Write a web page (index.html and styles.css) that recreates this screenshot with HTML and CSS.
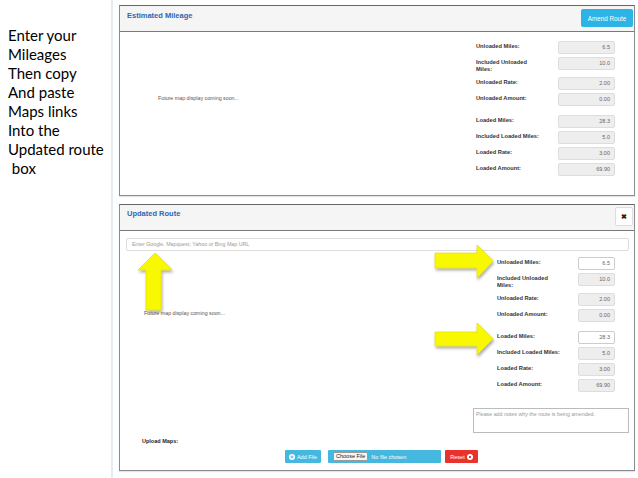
FILE: index.html
```html
<!DOCTYPE html>
<html>
<head>
    <meta charset="UTF-8">
    <title>Amend Route</title>
    <meta name="viewport" content="width=device-width, initial-scale=1">
    <link rel="stylesheet" href="styles.css">
</head>
<body>
<div class="notes">
    Enter your<br>
    Mileages<br>
    Then copy<br>
    And paste<br>
    Maps links<br>
    Into the<br>
    Updated route<br>
    &nbsp;box
</div>

<div class="main">
    <!-- estimated -->
    <div class="panel panel-est">
        <div class="panel-head">
            <div class="panel-title">Estimated Mileage</div>
            <button class="amend">Amend Route</button>
        </div>
        <div class="panel-body">
            <div class="map map-est">Future map display coming soon...</div>
            <div class="fields fields-est">
                <div class="row"><div class="lbl">Unloaded Miles:</div><div class="val">6.5</div></div>
                <div class="row"><div class="lbl">Included Unloaded<br>Miles:</div><div class="val">10.0</div></div>
                <div class="row"><div class="lbl">Unloaded Rate:</div><div class="val">2.00</div></div>
                <div class="row"><div class="lbl">Unloaded Amount:</div><div class="val">0.00</div></div>
                <div class="row group"><div class="lbl">Loaded Miles:</div><div class="val">28.3</div></div>
                <div class="row"><div class="lbl">Included Loaded Miles:</div><div class="val">5.0</div></div>
                <div class="row"><div class="lbl">Loaded Rate:</div><div class="val">3.00</div></div>
                <div class="row"><div class="lbl">Loaded Amount:</div><div class="val">69.90</div></div>
            </div>
        </div>
    </div>

    <!-- updated -->
    <div class="panel panel-upd">
        <div class="panel-head">
            <div class="panel-title">Updated Route</div>
            <button class="close">&#10006;</button>
        </div>
        <div class="url">Enter Google, Mapquest, Yahoo or Bing Map URL</div>
        <div class="panel-body">
            <div class="map map-upd">Future map display coming soon...</div>
            <div class="fields fields-upd">
                <div class="row"><div class="lbl">Unloaded Miles:</div><div class="val edit">6.5</div></div>
                <div class="row"><div class="lbl">Included Unloaded<br>Miles:</div><div class="val">10.0</div></div>
                <div class="row"><div class="lbl">Unloaded Rate:</div><div class="val">2.00</div></div>
                <div class="row"><div class="lbl">Unloaded Amount:</div><div class="val">0.00</div></div>
                <div class="row group"><div class="lbl">Loaded Miles:</div><div class="val edit">28.3</div></div>
                <div class="row"><div class="lbl">Included Loaded Miles:</div><div class="val">5.0</div></div>
                <div class="row"><div class="lbl">Loaded Rate:</div><div class="val">3.00</div></div>
                <div class="row"><div class="lbl">Loaded Amount:</div><div class="val">69.90</div></div>
            </div>
        </div>
        <div class="notes-box">Please add notes why the route is being amended.</div>
        <div class="upload-lbl">Upload Maps:</div>
        <div class="btns">
            <span class="btn btn-add">
                <svg width="6" height="6" viewBox="0 0 10 10"><circle cx="5" cy="5" r="5" fill="#fff"/><path d="M5 2.5v5M2.5 5h5" stroke="#45b8e0" stroke-width="1.6"/></svg>
                Add File
            </span>
            <span class="btn btn-file"><span class="choose">Choose File</span> No file chosen</span>
            <span class="btn btn-reset">
                Reset
                <svg width="6" height="6" viewBox="0 0 10 10"><circle cx="5" cy="5" r="5" fill="#fff"/><path d="M3.2 3.2l3.6 3.6M6.8 3.2l-3.6 3.6" stroke="#e8332c" stroke-width="1.6"/></svg>
            </span>
        </div>
    </div>
</div>

<!-- yellow pointers drawn over the form -->
<svg class="arrows" width="638" height="478" viewBox="0 0 638 478">
    <defs>
        <filter id="sh" x="-20%" y="-20%" width="150%" height="150%">
            <feDropShadow dx="1" dy="2" stdDeviation="1.5" flood-color="#000" flood-opacity="0.35"/>
        </filter>
    </defs>
    <polygon filter="url(#sh)" fill="#f8f800" stroke="#e0d800" stroke-width="0.6"
             points="155,253 172,270 161,270 161,310 146,310 146,270 138,270"/>
    <polygon filter="url(#sh)" fill="#f8f800" stroke="#e0d800" stroke-width="0.6"
             points="435,253 477,253 477,245 493,261 477,278 477,268 435,268"/>
    <polygon filter="url(#sh)" fill="#f8f800" stroke="#e0d800" stroke-width="0.6"
             points="435,332 477,332 477,323 493,339 477,355 477,346 435,346"/>
</svg>
</body>
</html>
```

FILE: styles.css
```css
body {
    margin: 0;
    display: flex;
    font-family: "Liberation Sans", Arial, sans-serif;
    background: #fff;
    overflow: hidden;
}

.notes {
    width: 113px;
    height: 478px;
    box-sizing: border-box;
    padding: 26px 0 0 8px;
    border-right: 2px solid #e4ecf2;
    font-family: Lato, "Open Sans", sans-serif;
    font-size: 15px;
    line-height: 19px;
    color: #000;
}

.main {
    padding: 5px 0 0 6px;
    display: flex;
    flex-direction: column;
    gap: 8px;
}

.panel {
    width: 516px;
    box-sizing: border-box;
    border: 1px solid #8c8c8c;
    border-top-color: #666;
    box-shadow: 0 1px 1px rgba(0,0,0,0.1);
}

.panel-est {
    height: 191px;
}

.panel-head {
    display: flex;
    justify-content: space-between;
    align-items: flex-start;
    height: 25px;
    background: #f5f5f5;
    border-bottom: 1px solid #7a7a7a;
    padding-left: 7px;
}

.panel-title {
    margin-top: 6px;
    font-size: 7.5px;
    line-height: 8px;
    font-weight: bold;
    color: #2e66b0;
}

.panel-upd .panel-title {
    margin-top: 5px;
}

.amend {
    margin: 3px 1px 0 0;
    width: 52px;
    height: 18px;
    border: none;
    border-radius: 2px;
    background: #2cb4e6;
    color: #fff;
    font-family: "Liberation Sans", Arial, sans-serif;
    font-size: 6.3px;
    padding: 0;
}

.close {
    margin: 2px 1px 0 0;
    width: 18px;
    height: 19px;
    background: #fff;
    border: 1px solid #ddd;
    border-radius: 2px;
    font-size: 7px;
    font-weight: bold;
    color: #222;
    padding: 0;
}

.panel-body {
    display: flex;
}

.map {
    flex: 1;
    font-size: 5.3px;
    line-height: 6px;
    color: #555;
}

.map-est {
    padding: 63px 0 0 38px;
}

.map-upd {
    padding: 59px 0 0 24px;
}

.fields-est {
    width: 158px;
    padding-top: 9px;
}

.fields-upd {
    width: 137px;
    padding-top: 6px;
}

.row {
    display: flex;
    align-items: flex-start;
    margin-bottom: 3px;
}

.row.group {
    margin-top: 9px;
}

.lbl {
    width: 82px;
    padding: 2px 0 1px;
    font-size: 5.7px;
    line-height: 7px;
    font-weight: bold;
    color: #333;
}

.fields-upd .lbl {
    width: 81px;
}

.val {
    width: 57px;
    height: 13px;
    box-sizing: border-box;
    background: #eee;
    border: 1px solid #ddd;
    border-radius: 2px;
    padding-right: 4px;
    text-align: right;
    font-size: 5.5px;
    line-height: 11px;
    color: #666;
}

.fields-upd .val {
    width: 37px;
}

.val.edit {
    background: #fff;
    border-color: #ccc;
}

.url {
    margin: 7px 5px 0 6px;
    height: 13px;
    box-sizing: border-box;
    border: 1px solid #ddd;
    border-radius: 2px;
    padding-left: 5px;
    font-size: 5.3px;
    line-height: 11px;
    color: #999;
}

.notes-box {
    margin: 13px 5px 0 auto;
    width: 156px;
    height: 25px;
    box-sizing: border-box;
    border: 1px solid #bbb;
    padding: 2px 2px;
    font-size: 5.3px;
    line-height: 6px;
    color: #999;
}

.upload-lbl {
    margin: 5px 0 0 22px;
    font-size: 5.5px;
    line-height: 7px;
    font-weight: bold;
    color: #222;
}

.btns {
    display: flex;
    align-items: center;
    margin-top: 5px;
    padding: 0 0 7px 165px;
}

.btn {
    display: flex;
    align-items: center;
    justify-content: center;
    gap: 2px;
    height: 13px;
    box-sizing: border-box;
    border-radius: 1px;
    font-size: 5.5px;
    color: #fff;
}

.btn-add {
    width: 36px;
    background: #45b8e0;
}

.btn-file {
    width: 113px;
    margin-left: 7px;
    background: #45b8e0;
    justify-content: flex-start;
    padding-left: 5px;
    gap: 3px;
}

.choose {
    background: #f6f6f6;
    border: 1px solid #999;
    border-radius: 1px;
    color: #222;
    padding: 0 2px;
    line-height: 7px;
}

.btn-reset {
    width: 33px;
    margin-left: 4px;
    background: #e8332c;
}

.arrows {
    position: absolute;
    left: 0;
    top: 0;
    pointer-events: none;
}
```
